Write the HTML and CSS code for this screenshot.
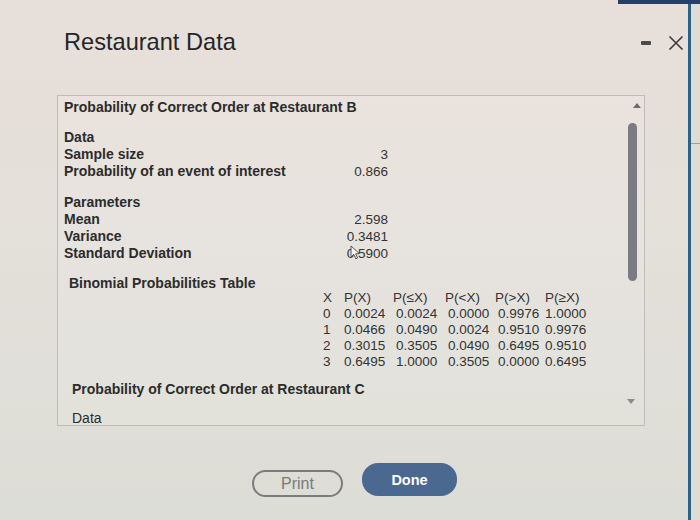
FILE: index.html
```html
<!DOCTYPE html>
<html>
<head>
<meta charset="utf-8">
<link rel="stylesheet" href="styles.css">
</head>
<body>
<div class="strip"><div class="strip-bar"></div></div>
<div class="screen">
  <div class="window">
    <div class="header">
      <div class="title">Restaurant Data</div>
      <div class="controls">
        <span class="minimize"></span>
        <svg class="close" width="16" height="16" viewBox="0 0 16 16"><path d="M1.5 1.5 L14.5 14.5 M14.5 1.5 L1.5 14.5" stroke="#3a3a3a" stroke-width="1.6" fill="none"/></svg>
      </div>
    </div>
    <div class="panel">
      <div class="content">
        <div class="heading">Probability of Correct Order at Restaurant B</div>
        <div class="block first">
          <div class="row"><span class="label">Data</span></div>
          <div class="row"><span class="label">Sample size</span><span class="value">3</span></div>
          <div class="row"><span class="label">Probability of an event of interest</span><span class="value">0.866</span></div>
        </div>
        <div class="block">
          <div class="row"><span class="label">Parameters</span></div>
          <div class="row"><span class="label">Mean</span><span class="value">2.598</span></div>
          <div class="row"><span class="label">Variance</span><span class="value">0.3481</span></div>
          <div class="row"><span class="label">Standard Deviation</span><span class="value">0.5900</span></div>
        </div>
        <div class="heading sub">Binomial Probabilities Table</div>
        <div class="table">
          <span>X</span><span>P(X)</span><span>P(≤X)</span><span>P(&lt;X)</span><span>P(&gt;X)</span><span>P(≥X)</span>
          <span>0</span><span>0.0024</span><span class="v">0.0024</span><span class="v">0.0000</span><span class="v">0.9976</span><span>1.0000</span>
          <span>1</span><span>0.0466</span><span class="v">0.0490</span><span class="v">0.0024</span><span class="v">0.9510</span><span>0.9976</span>
          <span>2</span><span>0.3015</span><span class="v">0.3505</span><span class="v">0.0490</span><span class="v">0.6495</span><span>0.9510</span>
          <span>3</span><span>0.6495</span><span class="v">1.0000</span><span class="v">0.3505</span><span class="v">0.0000</span><span>0.6495</span>
        </div>
        <div class="heading sub2">Probability of Correct Order at Restaurant C</div>
        <div class="heading sub3">Data</div>
      </div>
      <svg class="cursor" width="11" height="15" viewBox="0 0 11 15"><path d="M1 1 L1 12 L3.8 9.4 L5.8 13.8 L7.6 13 L5.7 8.8 L9.4 8.6 Z" fill="#f4f4f2" stroke="#555" stroke-width="1"/></svg>
      <span class="arrow-up"></span>
      <span class="thumb"></span>
      <span class="arrow-down"></span>
    </div>
    <div class="buttons">
      <button class="btn print">Print</button>
      <button class="btn done">Done</button>
    </div>
  </div>
  <div class="desktop"><div class="desk-line"></div></div>
</div>
</body>
</html>
```
FILE: styles.css
```css
html, body {
  margin: 0;
  padding: 0;
}
body {
  width: 700px;
  height: 520px;
  overflow: hidden;
  font-family: "Liberation Sans", Arial, sans-serif;
  background: linear-gradient(180deg, #e8dfd9 0%, #e4e0da 45%, #dcddd6 100%);
  color: #2c2c2c;
}
.strip {
  height: 4px;
  display: flex;
}
.strip-bar {
  margin-left: 618px;
  flex: 1;
  background: #22406a;
}
.screen {
  display: flex;
  height: 516px;
}
.window {
  width: 688px;
  border-right: 3px solid #2f6282;
  display: flex;
  flex-direction: column;
}
.desktop {
  flex: 1;
  background: #dcdcd8;
  padding-top: 139px;
}
.desk-line {
  height: 1px;
  background: #9aa0a4;
}
.header {
  display: flex;
  justify-content: space-between;
  align-items: flex-start;
  padding: 24px 4px 0 64px;
}
.title {
  font-size: 23.6px;
  line-height: 28px;
  color: #262626;
}
.controls {
  display: flex;
  align-items: center;
  gap: 17px;
  padding-top: 7px;
}
.minimize {
  width: 10px;
  height: 4px;
  background: #4a4a4a;
  border-radius: 1px;
}
.panel {
  position: relative;
  margin: 39px 0 0 57px;
  width: 588px;
  height: 331px;
  box-sizing: border-box;
  border: 1px solid #bdbcb8;
  background: rgba(255, 255, 255, 0.12);
  overflow: hidden;
}
.content {
  padding: 3px 0 0 6px;
}
.heading {
  font-size: 14px;
  font-weight: 700;
  line-height: 17px;
  color: #2c2c2c;
}
.block {
  width: 324px;
  margin-top: 14px;
}
.block.first {
  margin-top: 13px;
}
.row {
  display: flex;
  justify-content: space-between;
  line-height: 17px;
  height: 17px;
}
.label {
  font-size: 14px;
  font-weight: 700;
  color: #2c2c2c;
}
.value {
  font-size: 13.5px;
  color: #333;
}
.heading.sub {
  margin-top: 13px;
  padding-left: 5px;
}
.table {
  display: grid;
  grid-template-columns: 21px 49px 52px 50px 50px 50px;
  margin: -2px 0 0 259px;
  font-size: 13.5px;
  line-height: 16px;
  color: #333;
}
.table .v {
  padding-left: 3px;
}
.heading.sub2 {
  margin-top: 11px;
  padding-left: 8px;
}
.heading.sub3 {
  margin-top: 12px;
  padding-left: 8px;
  font-weight: 400;
}
.cursor {
  position: absolute;
  left: 292px;
  top: 149px;
}
.arrow-up {
  position: absolute;
  left: 575px;
  top: 7px;
  width: 0;
  height: 0;
  border-left: 4px solid transparent;
  border-right: 4px solid transparent;
  border-bottom: 5px solid #6c6c6c;
}
.thumb {
  position: absolute;
  left: 570px;
  top: 27px;
  width: 9px;
  height: 158px;
  border-radius: 5px;
  background: #7b7b82;
}
.arrow-down {
  position: absolute;
  left: 569px;
  top: 303px;
  width: 0;
  height: 0;
  border-left: 4px solid transparent;
  border-right: 4px solid transparent;
  border-top: 5px solid #8c8c8c;
}
.buttons {
  display: flex;
  align-items: flex-start;
  gap: 19px;
  margin: 37px 0 0 252px;
}
.btn {
  font-family: "Liberation Sans", Arial, sans-serif;
  border-radius: 16px;
  padding: 0;
  cursor: pointer;
}
.print {
  margin-top: 7px;
  width: 91px;
  height: 27px;
  border: 2px solid #7c7c7c;
  background: transparent;
  color: #7a7a7a;
  font-size: 16px;
}
.done {
  width: 95px;
  height: 33px;
  border: none;
  background: #4b6891;
  color: #ffffff;
  font-size: 14.5px;
  font-weight: 700;
}
```
